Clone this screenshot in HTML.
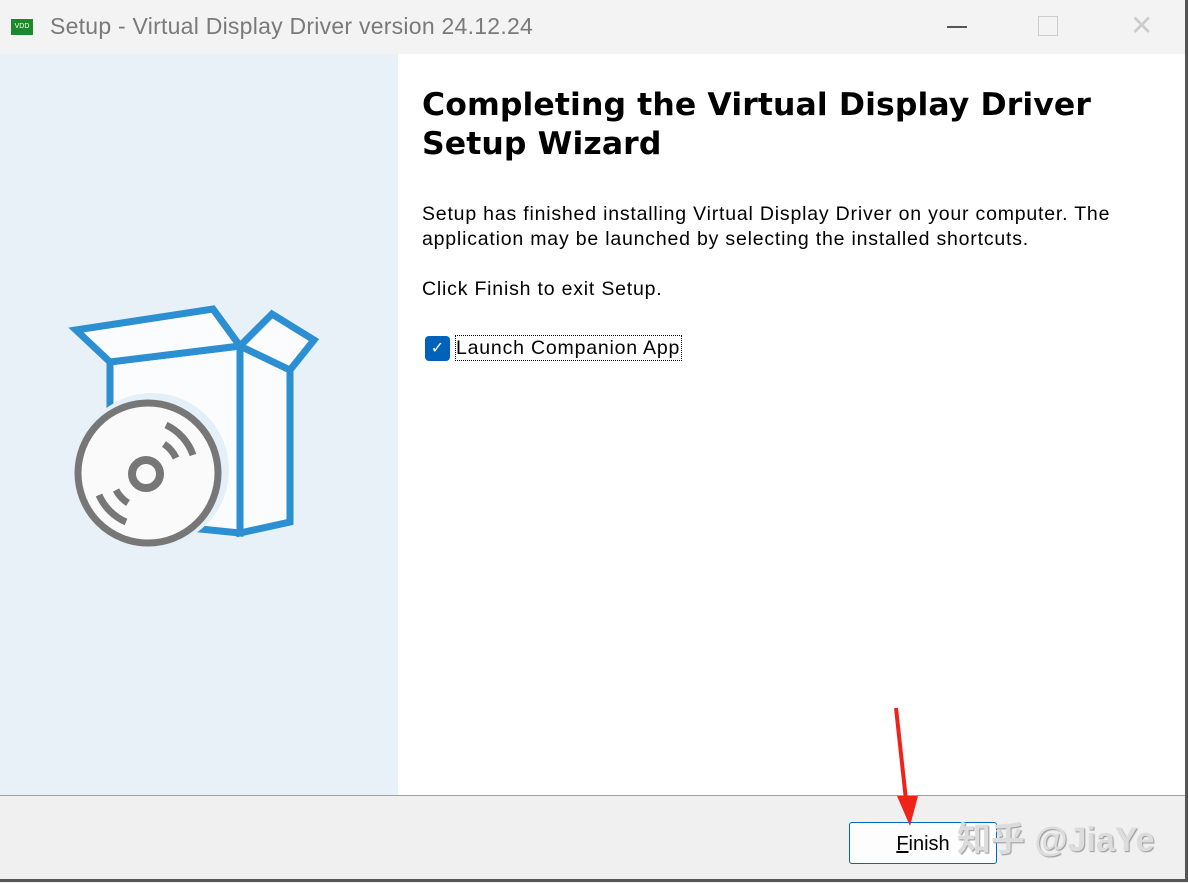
<!DOCTYPE html>
<html><head><meta charset="utf-8"><style>
body{margin:0;width:1188px;height:882px;overflow:hidden;background:#fff;font-family:"Liberation Sans","DejaVu Sans",sans-serif;position:relative}
.title{position:absolute;left:0;top:0;width:1188px;height:54px;background:#f3f3f3}
.title .t{position:absolute;left:50px;top:13px;font-size:23px;color:#7a7a7a;letter-spacing:0.25px}
.left{position:absolute;left:0;top:54px;width:398px;height:741px;background:#e8f1f8}
.h{position:absolute;left:422px;top:86px;font-size:31.5px;font-weight:bold;line-height:39px;color:#000;font-family:"DejaVu Sans",sans-serif;letter-spacing:0.1px}
.p{position:absolute;left:422px;font-size:19.5px;color:#000;line-height:25px;letter-spacing:0.8px}
.bottom{position:absolute;left:0;top:795px;width:1188px;height:87px;background:#f0f0f0;border-top:1px solid #a0a0a0}
.btn{position:absolute;left:849px;top:822px;width:148px;height:42px;border:1px solid #0067c0;border-radius:3px;background:#fdfdfd;font-size:20px;text-align:center;line-height:42px;box-sizing:border-box}
</style></head><body>
<div class="title">
<div style="position:absolute;left:11px;top:19px;width:22px;height:16px;background:#1c8a2c;color:#fff;font-size:7px;text-align:center;line-height:16px">VDD</div>
<div class="t">Setup - Virtual Display Driver version 24.12.24</div>
<div style="position:absolute;left:947px;top:26px;width:20px;height:1.5px;background:#555"></div>
<div style="position:absolute;left:1038px;top:16px;width:18px;height:18px;border:1px solid #ccc"></div>
<div style="position:absolute;left:1130px;top:12px;font-size:28px;color:#ccc;line-height:28px">✕</div>
</div>
<div class="left">
<svg width="398" height="795" style="position:absolute;left:0;top:-54px" viewBox="0 0 398 795">
<g fill="#fafcfd" stroke="#2b8fd1" stroke-width="7" stroke-linejoin="miter">
<path d="M110 362 L240 346 L240 533 L110 520 Z"/>
<path d="M240 346 L290 370 L290 522 L240 533 Z"/>
<path d="M76 330 L213 309 L240 346 L110 362 Z"/>
<path d="M240 346 L272 314 L314 340 L290 370 Z"/>
</g>
<circle cx="152" cy="470" r="77" fill="#e4eff7"/>
<circle cx="148" cy="473" r="70" fill="#fafafa" stroke="#777" stroke-width="7"/>
<circle cx="146" cy="474" r="14" fill="none" stroke="#777" stroke-width="8"/>
<g fill="none" stroke="#777" stroke-width="7">
<path d="M164 444 A34 34 0 0 1 176 458"/>
<path d="M166 425 A52 52 0 0 1 193 455"/>
<path d="M128 503 A34 34 0 0 1 116 490"/>
<path d="M126 522 A52 52 0 0 1 99 495"/>
</g>
</svg>
</div>
<div class="h">Completing the Virtual Display Driver<br>Setup Wizard</div>
<div class="p" style="top:202px">Setup has finished installing Virtual Display Driver on your computer. The<br>application may be launched by selecting the installed shortcuts.</div>
<div class="p" style="top:277px">Click Finish to exit Setup.</div>
<div style="position:absolute;left:425px;top:336px;width:25px;height:25px;background:#0062b8;border-radius:4px;color:#fff;font-size:16px;text-align:center;line-height:25px">✓</div>
<div class="p" style="top:335px;left:455px;border:1px dotted #000;line-height:24px;padding-right:1px">Launch Companion App</div>
<div class="bottom"></div>
<div class="btn"><u>F</u>inish</div>
<div style="position:absolute;left:957px;top:812px;font-size:34px;color:#dcdcdc;font-family:'Liberation Sans','Noto Sans CJK SC',sans-serif;font-weight:bold;text-shadow:1px 1px 1px #999">知乎 @JiaYe</div>
<svg width="60" height="140" style="position:absolute;left:880px;top:700px"><path d="M16 8 L26 100" stroke="#f0231b" stroke-width="4"/><path d="M17 96 L38 96 L30 126 Z" fill="#f0231b"/></svg>
<div style="position:absolute;left:1185px;top:0;width:3px;height:882px;background:#555"></div>
<div style="position:absolute;left:0;top:879px;width:1188px;height:3px;background:#555"></div>
</body></html>
